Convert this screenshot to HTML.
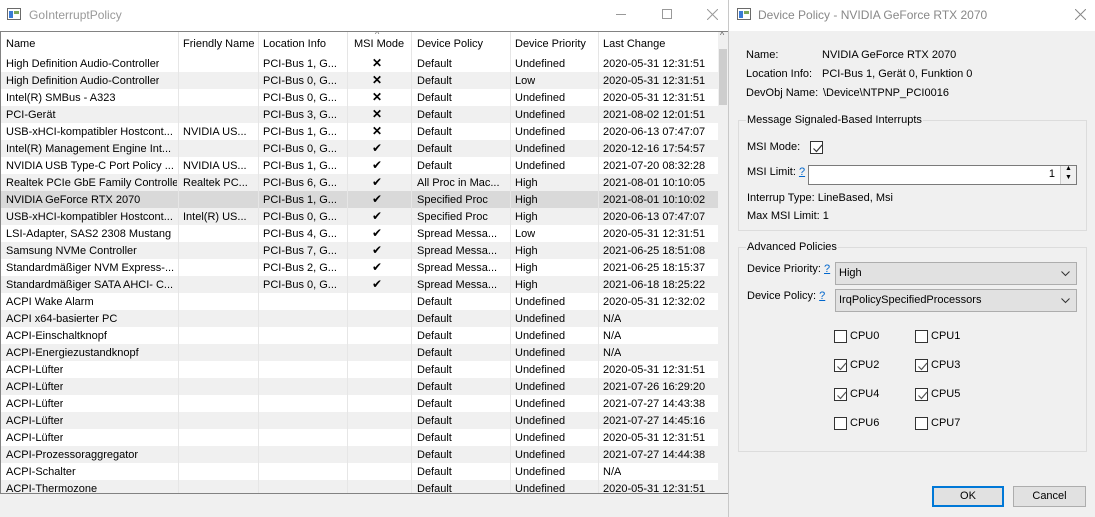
<!DOCTYPE html>
<html><head><meta charset="utf-8"><style>
*{margin:0;padding:0;box-sizing:border-box}
body{width:1095px;height:517px;overflow:hidden;background:#f0f0f0;font-family:"Liberation Sans",Tahoma,sans-serif;font-size:11px;color:#000;position:relative}
.a{position:absolute;white-space:nowrap}
#lw{position:absolute;left:0;top:0;width:728px;height:517px;background:#f0f0f0}
.tb{position:absolute;left:0;top:0;height:31px;background:#fff;width:100%}
.tt{position:absolute;top:8px;font-size:12px;color:#999}
#tbl{position:absolute;left:0;top:31px;width:728px;height:463px;border:1px solid #828282;border-right:none;background:#fff;overflow:hidden}
.hd{position:absolute;left:0;top:0;height:23px;width:718px;background:#fff}
.r{position:absolute;left:0;width:718px;height:17px}
.r span{position:absolute;top:3px;white-space:nowrap;overflow:hidden}
.g{background:#f0f0f0}.s{background:#d9d9d9}
.cl{position:absolute;top:23px;width:1px;height:440px;background:#e6e6e6}
.hl{position:absolute;top:0;width:1px;height:23px;background:#e5e5e5}
#sb{position:absolute;left:717px;top:0;width:10px;height:463px;background:#f0f0f0}
#dw{position:absolute;left:728px;top:0;width:367px;height:517px;background:#f0f0f0;border-left:1px solid #c8c8c8}
.gb{position:absolute;border:1px solid #dcdcdc}
.gl{position:absolute;background:#f0f0f0;padding:0 1px}
.cb{position:absolute;width:13px;height:13px;border:1px solid #333;background:#fff}
.cb svg{position:absolute;left:1px;top:1px}
.q{color:#0066cc;text-decoration:underline}
.combo{position:absolute;height:23px;border:1px solid #adadad;background:#e1e1e1}
.btn{position:absolute;height:21px;border:1px solid #adadad;background:#e1e1e1;text-align:center;line-height:19px}
</style></head><body>
<div id="lw">
 <div class="tb">
  <svg class="a" style="left:7px;top:8px" width="14" height="12"><rect x="0.5" y="0.5" width="13" height="11" fill="#fff" stroke="#6a6a6a"/><rect x="2" y="3" width="4" height="7" fill="#3a7bd5"/><rect x="7" y="3" width="5" height="3" fill="#7aa85a"/></svg>
  <div class="tt" style="left:29px">GoInterruptPolicy</div>
  <div class="a" style="left:616px;top:14px;width:10px;height:1px;background:#999"></div>
  <div class="a" style="left:662px;top:9px;width:10px;height:10px;border:1px solid #999"></div>
  <svg class="a" style="left:707px;top:9px" width="11" height="11"><path d="M0 0L11 11M11 0L0 11" stroke="#999" stroke-width="1"/></svg>
 </div>
 <div id="tbl">
  <div class="hd">
   <span class="a" style="left:5px;top:6px">Name</span>
   <span class="a" style="left:182px;top:6px">Friendly Name</span>
   <span class="a" style="left:262px;top:6px">Location Info</span>
   <span class="a" style="left:353px;top:6px">MSI Mode</span>
   <span class="a" style="left:374px;top:-3px;font-size:9px;color:#666">^</span>
   <span class="a" style="left:416px;top:6px">Device Policy</span>
   <span class="a" style="left:514px;top:6px">Device Priority</span>
   <span class="a" style="left:602px;top:6px">Last Change</span>
   <div class="hl" style="left:177px"></div><div class="hl" style="left:257px"></div><div class="hl" style="left:346px"></div><div class="hl" style="left:410px"></div><div class="hl" style="left:509px"></div><div class="hl" style="left:597px"></div>
  </div>
  <div id="rows"></div>
  <div class="cl" style="left:177px"></div><div class="cl" style="left:257px"></div><div class="cl" style="left:346px"></div><div class="cl" style="left:410px"></div><div class="cl" style="left:509px"></div><div class="cl" style="left:597px"></div>
  <div id="sb"><div class="a" style="left:1px;top:17px;width:8px;height:56px;background:#cdcdcd"></div><span class="a" style="left:2px;top:-2px;font-size:9px;color:#606060">^</span></div>
 </div>
</div>
<div id="dw">
 <div class="tb">
  <svg class="a" style="left:8px;top:8px" width="14" height="12"><rect x="0.5" y="0.5" width="13" height="11" fill="#fff" stroke="#6a6a6a"/><rect x="2" y="3" width="4" height="7" fill="#3a7bd5"/><rect x="7" y="3" width="5" height="3" fill="#7aa85a"/></svg>
  <div class="tt" style="left:29px;color:#888">Device Policy - NVIDIA GeForce RTX 2070</div>
  <svg class="a" style="left:346px;top:9px" width="11" height="11"><path d="M0 0L11 11M11 0L0 11" stroke="#888"/></svg>
 </div>
 <span class="a" style="left:17px;top:49px">Name:</span><span class="a" style="left:93px;top:49px">NVIDIA GeForce RTX 2070</span>
 <span class="a" style="left:17px;top:68px">Location Info:</span><span class="a" style="left:93px;top:68px">PCI-Bus 1, Gerät 0, Funktion 0</span>
 <span class="a" style="left:17px;top:87px">DevObj Name:</span><span class="a" style="left:94px;top:87px">\Device\NTPNP_PCI0016</span>
 <div class="gb" style="left:9px;top:120px;width:349px;height:111px"></div>
 <span class="gl a" style="left:17px;top:114px">Message Signaled-Based Interrupts</span>
 <span class="a" style="left:18px;top:141px">MSI Mode:</span>
 <div class="cb" style="left:81px;top:141px"><svg width="11" height="11"><path d="M1.5 5.5L4.5 8.5L10 2" stroke="#333" fill="none" stroke-width="1.2"/></svg></div>
 <span class="a" style="left:18px;top:166px">MSI Limit: <span class="q">?</span></span>
 <div class="a" style="left:79px;top:165px;width:269px;height:20px;border:1px solid #7a7a7a;background:#fff"><span class="a" style="right:21px;top:2px">1</span><div class="a" style="right:0;top:0;width:16px;height:18px;border-left:1px solid #ccc;background:#f0f0f0"><span class="a" style="left:4px;top:-1px;font-size:7px">▲</span><span class="a" style="left:4px;top:8px;font-size:7px">▼</span></div></div>
 <span class="a" style="left:18px;top:192px">Interrup Type: LineBased, Msi</span>
 <span class="a" style="left:18px;top:210px">Max MSI Limit: 1</span>
 <div class="gb" style="left:9px;top:247px;width:349px;height:205px"></div>
 <span class="gl a" style="left:17px;top:241px">Advanced Policies</span>
 <span class="a" style="left:18px;top:263px">Device Priority: <span class="q">?</span></span>
 <div class="combo" style="left:106px;top:262px;width:242px"><span class="a" style="left:3px;top:4px">High</span><svg class="a" style="right:6px;top:8px" width="9" height="6"><path d="M0.5 0.5L4.5 4.5L8.5 0.5" stroke="#333" fill="none"/></svg></div>
 <span class="a" style="left:18px;top:290px">Device Policy: <span class="q">?</span></span>
 <div class="combo" style="left:106px;top:289px;width:242px"><span class="a" style="left:3px;top:4px">IrqPolicySpecifiedProcessors</span><svg class="a" style="right:6px;top:8px" width="9" height="6"><path d="M0.5 0.5L4.5 4.5L8.5 0.5" stroke="#333" fill="none"/></svg></div>
 <div id="cpus"></div>
 <div class="btn" style="left:203px;top:486px;width:72px;border:2px solid #0078d7;line-height:17px">OK</div>
 <div class="btn" style="left:284px;top:486px;width:73px">Cancel</div>
</div>
<script>
var R=[["High Definition Audio-Controller","","PCI-Bus 1, G...","x","Default","Undefined","2020-05-31 12:31:51"],
["High Definition Audio-Controller","","PCI-Bus 0, G...","x","Default","Low","2020-05-31 12:31:51"],
["Intel(R) SMBus - A323","","PCI-Bus 0, G...","x","Default","Undefined","2020-05-31 12:31:51"],
["PCI-Gerät","","PCI-Bus 3, G...","x","Default","Undefined","2021-08-02 12:01:51"],
["USB-xHCI-kompatibler Hostcont...","NVIDIA US...","PCI-Bus 1, G...","x","Default","Undefined","2020-06-13 07:47:07"],
["Intel(R) Management Engine Int...","","PCI-Bus 0, G...","v","Default","Undefined","2020-12-16 17:54:57"],
["NVIDIA USB Type-C Port Policy ...","NVIDIA US...","PCI-Bus 1, G...","v","Default","Undefined","2021-07-20 08:32:28"],
["Realtek PCIe GbE Family Controller","Realtek PC...","PCI-Bus 6, G...","v","All Proc in Mac...","High","2021-08-01 10:10:05"],
["NVIDIA GeForce RTX 2070","","PCI-Bus 1, G...","v","Specified Proc","High","2021-08-01 10:10:02"],
["USB-xHCI-kompatibler Hostcont...","Intel(R) US...","PCI-Bus 0, G...","v","Specified Proc","High","2020-06-13 07:47:07"],
["LSI-Adapter, SAS2 2308 Mustang","","PCI-Bus 4, G...","v","Spread Messa...","Low","2020-05-31 12:31:51"],
["Samsung NVMe Controller","","PCI-Bus 7, G...","v","Spread Messa...","High","2021-06-25 18:51:08"],
["Standardmäßiger NVM Express-...","","PCI-Bus 2, G...","v","Spread Messa...","High","2021-06-25 18:15:37"],
["Standardmäßiger SATA AHCI- C...","","PCI-Bus 0, G...","v","Spread Messa...","High","2021-06-18 18:25:22"],
["ACPI Wake Alarm","","","","Default","Undefined","2020-05-31 12:32:02"],
["ACPI x64-basierter PC","","","","Default","Undefined","N/A"],
["ACPI-Einschaltknopf","","","","Default","Undefined","N/A"],
["ACPI-Energiezustandknopf","","","","Default","Undefined","N/A"],
["ACPI-Lüfter","","","","Default","Undefined","2020-05-31 12:31:51"],
["ACPI-Lüfter","","","","Default","Undefined","2021-07-26 16:29:20"],
["ACPI-Lüfter","","","","Default","Undefined","2021-07-27 14:43:38"],
["ACPI-Lüfter","","","","Default","Undefined","2021-07-27 14:45:16"],
["ACPI-Lüfter","","","","Default","Undefined","2020-05-31 12:31:51"],
["ACPI-Prozessoraggregator","","","","Default","Undefined","2021-07-27 14:44:38"],
["ACPI-Schalter","","","","Default","Undefined","N/A"],
["ACPI-Thermozone","","","","Default","Undefined","2020-05-31 12:31:51"]];
var X=[5,182,262,0,416,514,602],W=[171,74,82,0,92,86,115],h="";
R.forEach(function(r,i){var c=i==8?"s":(i%2?"g":"");h+='<div class="r '+c+'" style="top:'+(23+i*17)+'px">';
r.forEach(function(t,j){if(j==3){if(t=="x")h+='<span style="left:371px;font-weight:bold;font-size:12px;top:1px">✕</span>';else if(t=="v")h+='<span style="left:371px;font-size:12px;top:1px">✔</span>';}else if(t)h+='<span style="left:'+X[j]+'px;max-width:'+W[j]+'px">'+t+'</span>';});h+='</div>';});
document.getElementById("rows").innerHTML=h;
var c="",on=[0,0,1,1,1,1,0,0];
for(var k=0;k<8;k++){var x=k%2?186:105,y=330+Math.floor(k/2)*29;
c+='<div class="cb" style="left:'+x+'px;top:'+y+'px">'+(on[k]?'<svg width="11" height="11"><path d="M1.5 5.5L4.5 8.5L10 2" stroke="#555" fill="none" stroke-width="1.2"/></svg>':'')+'</div><span class="a" style="left:'+(x+16)+'px;top:'+(y)+'px">CPU'+k+'</span>';}
document.getElementById("cpus").innerHTML=c;
</script>
</body></html>
